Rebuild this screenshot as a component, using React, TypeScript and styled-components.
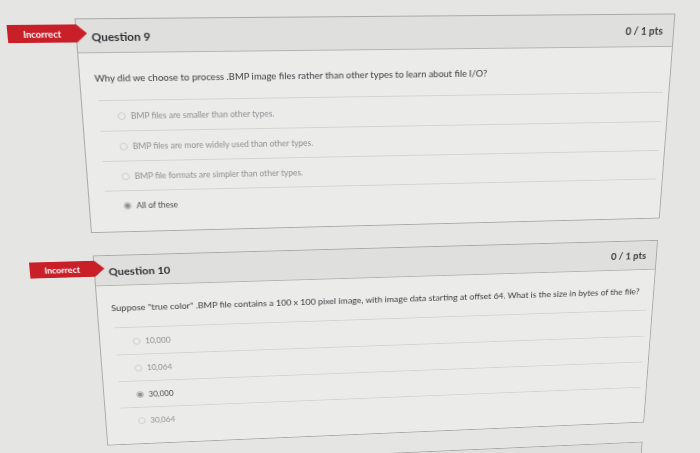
import React from "react";
import styled, { createGlobalStyle } from "styled-components";

const Global = createGlobalStyle`
  html, body { margin: 0; padding: 0; background: #e5e6e4; overflow: hidden; }
  body { font-family: Lato, "Open Sans", "Liberation Sans", sans-serif; }
  * { box-sizing: border-box; }
`;

const Stage = styled.div`
  width: 700px;
  height: 453px;
  overflow: hidden;
  background: #e5e6e4;
`;

const Sheet = styled.div`
  width: 700px;
  padding: 16px 16px 0 81px;
  display: flex;
  flex-direction: column;
  gap: 25px;
  transform-origin: 375px 10px;
  transform: perspective(600px) rotateX(-8.7deg) rotateY(2.9deg);
`;

const Card = styled.section`
  position: relative;
  width: 603px;
  border: 1px solid #a9aaa8;
  background: #ebebe9;
`;

const Header = styled.header`
  height: 34px;
  display: flex;
  align-items: center;
  justify-content: space-between;
  padding: 0 11px 0 14px;
  background: #dfe0de;
  border-bottom: 1px solid #b4b5b3;
`;

const Title = styled.h2`
  margin: 0;
  padding-top: 2px;
  font-size: 11.5px;
  font-weight: 700;
  color: #2f3033;
`;

const Points = styled.span`
  font-size: 10.5px;
  font-weight: 700;
  color: #3a3b3e;
`;

const Badge = styled.div`
  position: absolute;
  left: -66px;
  top: 5px;
  height: 18px;
  width: 66px;
  background: #c91f28;
  color: #fff;
  font-size: 9px;
  font-weight: 700;
  display: flex;
  align-items: center;
  justify-content: center;
  &::after {
    content: "";
    position: absolute;
    right: -10px;
    top: 0;
    border-top: 9px solid transparent;
    border-bottom: 9px solid transparent;
    border-left: 10px solid #c91f28;
  }
`;

const Body = styled.div`
  padding: 19px 6px 13px 14px;
`;

const QuestionText = styled.p`
  margin: 0;
  font-size: 9.5px;
  line-height: 14px;
  color: #3b3c3f;
  white-space: nowrap;
`;

const Answers = styled.ul`
  list-style: none;
  margin: 15px 0 0 2px;
  padding: 0;
`;

const Row = styled.li`
  height: 32px;
  display: flex;
  align-items: center;
  border-top: 1px solid #d3d4d2;
`;

const Radio = styled.span<{ $checked?: boolean }>`
  flex-shrink: 0;
  width: 8px;
  height: 8px;
  margin-left: 18px;
  margin-right: 5px;
  border-radius: 50%;
  border: 1px solid ${(p) => (p.$checked ? "#b3b4b6" : "#cdcecc")};
  background: ${(p) =>
    p.$checked
      ? "radial-gradient(circle, #8d8e91 0 42%, #c9cacc 58%)"
      : "#ecedeb"};
`;

const Label = styled.span<{ $checked?: boolean }>`
  font-size: 8.5px;
  color: ${(p) => (p.$checked ? "#4a4b4e" : "#8e8f92")};
`;

type Q = {
  title: string;
  text: string;
  answers: string[];
  picked: number;
};

const questions: Q[] = [
  {
    title: "Question 9",
    text: "Why did we choose to process .BMP image files rather than other types to learn about file I/O?",
    answers: [
      "BMP files are smaller than other types.",
      "BMP files are more widely used than other types.",
      "BMP file formats are simpler than other types.",
      "All of these",
    ],
    picked: 3,
  },
  {
    title: "Question 10",
    text: 'Suppose "true color" .BMP file contains a 100 x 100 pixel image, with image data starting at offset 64. What is the size in bytes of the file?',
    answers: ["10,000", "10,064", "30,000", "30,064"],
    picked: 2,
  },
];

function QuestionCard({ q }: { q: Q }) {
  return (
    <Card>
      <Badge>Incorrect</Badge>
      <Header>
        <Title>{q.title}</Title>
        <Points>0 / 1 pts</Points>
      </Header>
      <Body>
        <QuestionText>{q.text}</QuestionText>
        <Answers>
          {q.answers.map((a, i) => (
            <Row key={a}>
              <Radio $checked={i === q.picked} />
              <Label $checked={i === q.picked}>{a}</Label>
            </Row>
          ))}
        </Answers>
      </Body>
    </Card>
  );
}

export default function App() {
  return (
    <>
      <Global />
      <Stage>
        <Sheet>
          {questions.map((q) => (
            <QuestionCard key={q.title} q={q} />
          ))}
          <Card>
            <Badge>Incorrect</Badge>
            <Header>
              <Title>Question 11</Title>
              <Points>0 / 1 pts</Points>
            </Header>
            <Body>
              <QuestionText>&nbsp;</QuestionText>
            </Body>
          </Card>
        </Sheet>
      </Stage>
    </>
  );
}
